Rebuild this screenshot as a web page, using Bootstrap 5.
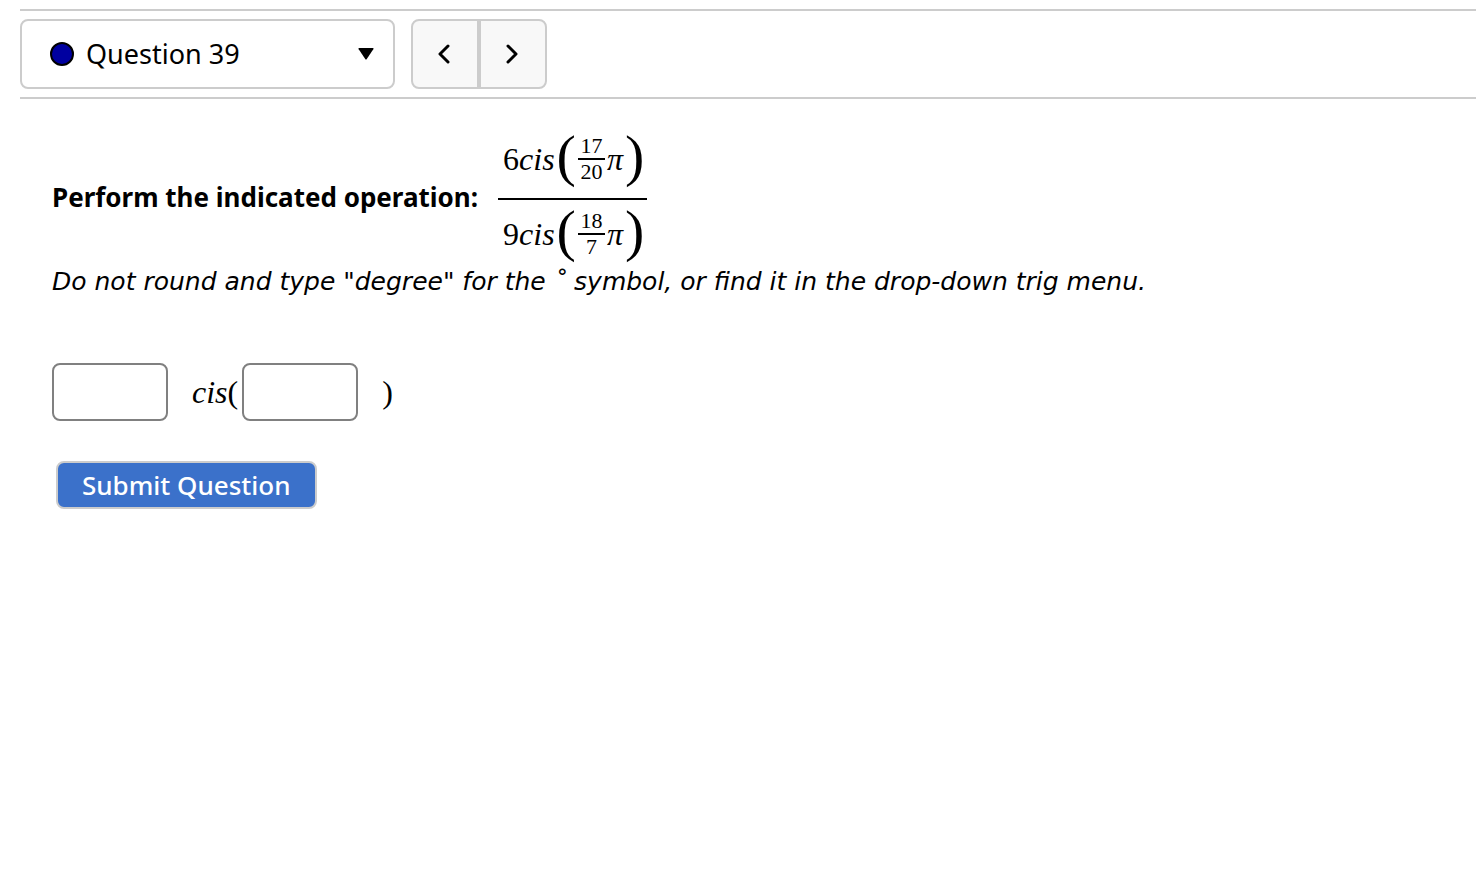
<!DOCTYPE html>
<html lang="en">
<head>
<meta charset="utf-8">
<meta name="viewport" content="width=device-width, initial-scale=1">
<title>Question 39</title>
<link href="https://cdn.jsdelivr.net/npm/bootstrap@5.3.0/dist/css/bootstrap.min.css" rel="stylesheet">
<style>
body { font-family: "Noto Sans", "Open Sans", sans-serif; font-size: 26px; line-height: 36px; color: #000; background: #fff; }
.q-header { margin: 9px 0 0 20px; border-top: 2px solid #ccc; border-bottom: 2px solid #ccc; }
.q-picker { width: 375px; }
.q-picker .form-select {
  height: 70px; padding: 0 64px; font-size: 27px; color: #000; border: 2px solid #ccc; border-radius: 8px;
  background-image: url("data:image/svg+xml,%3Csvg xmlns='http://www.w3.org/2000/svg' viewBox='0 0 16 12'%3E%3Cpath d='M1 0H15Q16 0 15.3 1.2L8.8 11Q8 12 7.2 11L.7 1.2Q0 0 1 0Z'/%3E%3C/svg%3E");
  background-size: 16px 12px; background-position: right 19px center;
}
.q-dot { left: 30px; width: 24px; height: 24px; border: 2px solid #000; background: #0000a0; pointer-events: none; }
.q-step { width: 68px; height: 70px; padding: 0 2px 0 0; background: #f8f8f8; border: 2px solid #ccc; border-radius: 8px; }
.q-step:hover { background: #eee; border-color: #ccc; }
.q-body { padding: 33px 52px 0; }
.q-hint { font-family: "DejaVu Sans", sans-serif; font-size: 25px; line-height: 34px; padding-top: 4px; }
.math { font-family: "Liberation Serif", serif; font-size: 32px; line-height: 36px; }
.big-frac { width: 149px; margin-left: 20px; }
.term { height: 54px; padding-left: 5px; gap: 2px; box-sizing: content-box; }
.over { border-bottom: 2px solid #000; padding-bottom: 12px; }
.under { padding-top: 7px; }
.delim { font-size: 58px; line-height: 48px; padding-bottom: 6px; }
.small-frac { font-size: 22px; line-height: 24px; width: 27px; text-align: center; }
.small-frac span + span { border-top: 2px solid #000; }
.answer { width: 116px; height: 58px; border: 2px solid #808080; border-radius: 8px; font-size: 26px; }
.gap-text { margin-left: 24px; }
.q-submit { height: 48px; margin-top: 40px; padding: 0 24px; font-size: 26px; font-weight: 500; line-height: 36px; color: #fff; background: #3b71ca; border: 2px solid #ccc; border-radius: 8px; }
.q-submit:hover { color: #fff; background: #3160ad; border-color: #ccc; }
</style>
</head>
<body>
<header class="q-header d-flex py-2 gap-3">
  <div class="q-picker position-relative d-flex align-items-center">
    <select class="form-select" aria-label="Question"><option>Question 39</option></select>
    <span class="q-dot position-absolute rounded-circle"></span>
  </div>
  <nav class="btn-group" aria-label="Question navigation">
    <button type="button" class="btn q-step rounded-end-0 flex-grow-0" aria-label="Previous question">
      <svg class="d-block mx-auto" width="14" height="20" viewBox="0 0 14 20" fill="none" stroke="#000" stroke-width="3" stroke-linecap="round" stroke-linejoin="round" aria-hidden="true"><path d="M11 2L3 10L11 18"/></svg>
    </button>
    <button type="button" class="btn q-step rounded-start-0 flex-grow-0 ms-0" aria-label="Next question">
      <svg class="d-block mx-auto" width="14" height="20" viewBox="0 0 14 20" fill="none" stroke="#000" stroke-width="3" stroke-linecap="round" stroke-linejoin="round" aria-hidden="true"><path d="M3 2L11 10L3 18"/></svg>
    </button>
  </nav>
</header>
<main class="q-body">
  <div class="d-flex align-items-center">
    <strong>Perform the indicated operation:</strong>
    <div class="math big-frac">
      <div class="term over d-flex align-items-center">
        <span>6<i>cis</i></span><span class="delim">(</span>
        <span class="small-frac d-flex flex-column"><span>17</span><span>20</span></span>
        <i>π</i><span class="delim">)</span>
      </div>
      <div class="term under d-flex align-items-center">
        <span>9<i>cis</i></span><span class="delim">(</span>
        <span class="small-frac d-flex flex-column"><span>18</span><span>7</span></span>
        <i>π</i><span class="delim">)</span>
      </div>
    </div>
  </div>
  <p class="q-hint fst-italic mb-0">Do not round and type "degree" for the ˚ symbol, or find it in the drop-down trig menu.</p>
  <form>
    <div class="d-flex align-items-center mt-5 pt-3">
      <input class="form-control answer" type="text" aria-label="Modulus">
      <span class="math gap-text me-1"><i>cis</i>(</span>
      <input class="form-control answer" type="text" aria-label="Angle">
      <span class="math gap-text">)</span>
    </div>
    <button type="button" class="btn q-submit ms-1">Submit Question</button>
  </form>
</main>
<script src="https://cdn.jsdelivr.net/npm/bootstrap@5.3.0/dist/js/bootstrap.bundle.min.js"></script>
</body>
</html>
